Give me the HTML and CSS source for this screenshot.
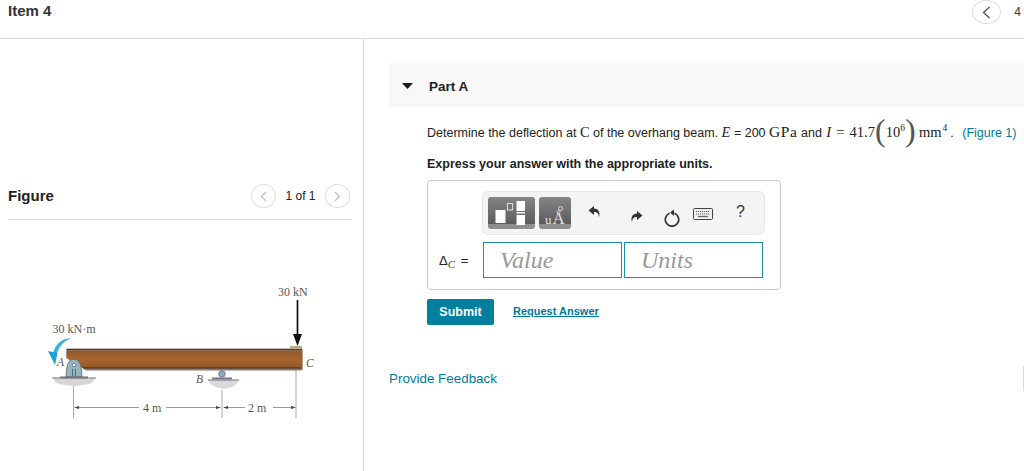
FILE: index.html
```html
<!DOCTYPE html>
<html lang="en">
<head>
<meta charset="utf-8">
<title>Item 4</title>
<link rel="stylesheet" href="styles.css">
</head>
<body>
<header class="top">
  <h1 class="item-title">Item 4</h1>
  <div class="pager">
    <span class="round round-lg"><svg width="9" height="13" viewBox="0 0 9 13"><path d="M7.5 1 1.500 6.500 7.500 12" fill="none" stroke="#555" stroke-width="1.400"/></svg></span>
    <span class="pager-num">4</span>
  </div>
</header>
<main class="columns">
  <section class="figure-col">
    <div class="figure-head">
      <h2 class="figure-title">Figure</h2>
      <div class="figure-nav">
        <span class="round"><svg width="7" height="11" viewBox="0 0 7 11"><path d="M6 1 1.500 5.500 6 10" fill="none" stroke="#bbb" stroke-width="1.200"/></svg></span>
        <span class="figure-count">1 of 1</span>
        <span class="round"><svg width="7" height="11" viewBox="0 0 7 11"><path d="M1 1 5.500 5.500 1 10" fill="none" stroke="#bbb" stroke-width="1.200"/></svg></span>
      </div>
    </div>
    <svg class="beam" width="340" height="170" viewBox="0 0 340 170">
      <defs>
        <linearGradient id="beamfill" x1="0" y1="0" x2="0" y2="1">
          <stop offset="0" stop-color="#8f5a2c"/><stop offset=".5" stop-color="#a9662f"/><stop offset="1" stop-color="#935827"/>
        </linearGradient>
      </defs>
      <g fill="#555" font-family="Liberation Serif, serif" font-size="12">
        <text x="278" y="26">30 kN</text>
        <text x="52.500" y="63">30 kN·m</text>
        <text x="143" y="142">4 m</text>
        <text x="248" y="142">2 m</text>
        <g font-style="italic" font-size="11.500">
          <text x="57" y="96">A</text>
          <text x="196" y="113">B</text>
          <text x="306" y="97">C</text>
        </g>
      </g>
      <g stroke="#aaa" stroke-width="1" fill="none">
        <path d="M73.500 112V148M222 120V148M296 100V148"/>
      </g>
      <g stroke="#999" stroke-width="1" fill="none">
        <path d="M76 137.500H139M166 137.500H219M225 137.500H245M273 137.500H293"/>
      </g>
      <g fill="#444">
        <path d="M74 137.500l5-1.500v3zM221 137.500l-5-1.500v3zM223 137.500l5-1.500v3zM296 137.500l-5-1.500v3z"/>
      </g>
      <path d="M52 107h44l-4 6q-18 6-36 0z" fill="#d6d6d6"/>
      <path d="M208 110h31q-3 8-15 9q-12-1-16-9z" fill="#d9d9d9"/>
      <rect x="66.500" y="78.500" width="235" height="22" fill="#8f7a70"/>
      <rect x="66.500" y="80.500" width="235" height="17.500" fill="url(#beamfill)"/>
      <path d="M66.500 79.500H302V100" fill="none" stroke="#5a3a28" stroke-width="1"/>
      <path d="M80 98H301" stroke="#3a2412" stroke-width="1"/>
      <rect x="290" y="76" width="12" height="3" fill="#b9a98c"/>
      <path d="M66 102V88L80 96 90 104V108H66z" fill="#fff"/>
      <path d="M66 107q0-18 8-18t8 18z" fill="#94b5c0" stroke="#4f5f66" stroke-width=".7"/>
      <circle cx="74" cy="95" r="1.700" fill="#fff" stroke="#456" stroke-width=".6"/>
      <path d="M72.500 99v7M75.500 99v7" stroke="#456" stroke-width=".8"/>
      <path d="M60 107.500H88" stroke="#667" stroke-width="2"/>
      <path d="M52 108H96" stroke="#888" stroke-width="1"/>
      <circle cx="222" cy="104" r="3.300" fill="#7fb3c2" stroke="#556" stroke-width=".6"/>
      <rect x="212" y="107.500" width="20" height="2" fill="#778"/>
      <path d="M208 110H239" stroke="#777" stroke-width="1"/>
      <path d="M297.500 30V66" stroke="#111" stroke-width="1.700"/>
      <path d="M293 64H302L297.500 76z" fill="#111"/>
      <path d="M71 68q-14 1-18 15l4 0q3-10 14-15z" fill="#35b2de"/>
      <path d="M48 81 57.500 83 55 95z" fill="#18a0d8"/>
    </svg>
  </section>
  <section class="part-col">
    <div class="part-bar">
      <svg class="caret" width="11" height="6" viewBox="0 0 11 6"><path d="M0 0H11L5.500 6z" fill="#1a1a1a"/></svg>
      <h2 class="part-title">Part A</h2>
    </div>
    <div class="part-body">
      <p class="question">Determine the deflection at <span class="m">C</span> of the overhang beam. <span class="m"><i>E</i></span> = 200 <span class="m m-units">GPa</span> and <span class="m m-eq"><i>I</i> = 41.7</span><span class="paren">(</span><span class="m">10<sup>6</sup></span><span class="paren">)</span> <span class="m m-mm">mm<sup>4</sup></span>. <a class="link-plain">(Figure 1)</a></p>
      <p class="express">Express your answer with the appropriate units.</p>
      <div class="answer">
        <div class="toolbar">
          <span class="tool tool-wide">
            <svg width="47" height="32" viewBox="0 0 47 32">
              <rect x="7.500" y="13" width="10" height="13" fill="#fff"/>
              <rect x="19.500" y="6.500" width="5" height="6.500" fill="none" stroke="#ddd" stroke-width="1"/>
              <rect x="28.500" y="4" width="8.500" height="10" fill="#fff"/>
              <rect x="28.500" y="15" width="8.500" height="1.500" fill="#fff"/>
              <rect x="28.500" y="18" width="8.500" height="10" fill="#fff"/>
            </svg>
          </span>
          <span class="tool tool-unit"><span class="unit-ring"></span><span class="unit-text"><span class="unit-mu">u</span>Å</span></span>
          <svg class="action action-undo" width="16" height="16" viewBox="0 0 16 16"><path d="M7 2 1.500 6.500 7 11V8c3 0 4.500 1 5 5 1.500-5-.5-8-5-8.500z" fill="#333"/></svg>
          <svg class="action action-redo" width="16" height="16" viewBox="0 0 16 16"><path d="M9 2 14.500 6.500 9 11V8c-3 0-4.500 1-5 5-1.500-5 .5-8 5-8.500z" fill="#333"/></svg>
          <svg class="action action-reset" width="18" height="18" viewBox="0 0 18 18"><path d="M6.500 4.300a6.700 6.700 0 1 0 5 0" fill="none" stroke="#333" stroke-width="1.700"/><path d="M11 .5V7L7 3.500z" fill="#333"/></svg>
          <svg class="action action-keys" width="20" height="12" viewBox="0 0 20 12"><rect x=".5" y=".5" width="19" height="11" rx="1" fill="#eee" stroke="#444"/><path d="M3 3.500h14M3 6h14" stroke="#666" stroke-width="1.200" stroke-dasharray="1.200 .8"/><path d="M5 8.500h10" stroke="#666" stroke-width="1.200"/></svg>
          <span class="help">?</span>
        </div>
        <div class="entry">
          <span class="delta">Δ<i class="sub">C</i> =</span>
          <span class="field">Value</span>
          <span class="field">Units</span>
        </div>
      </div>
      <div class="actions">
        <button class="submit" type="button">Submit</button>
        <a class="request">Request Answer</a>
      </div>
    </div>
    <a class="feedback">Provide Feedback</a>
  </section>
</main>
<span class="edge-mark"></span>
</body>
</html>
```
FILE: styles.css
```css
* { box-sizing: border-box; }
html, body { margin: 0; height: 471px; overflow: hidden; background: #fff; }
body { font-family: "Liberation Sans", Arial, sans-serif; color: #222; font-size: 12px; position: relative; }

.top { height: 39px; border-bottom: 1px solid #dcdcdc; display: flex; justify-content: space-between; align-items: flex-start; padding: 0 0 0 8px; }
.item-title { margin: 2px 0 0; font-size: 15px; line-height: 18px; font-weight: 700; color: #333; }
.pager { display: flex; align-items: center; gap: 13px; padding-right: 3px; }
.pager-num { font-size: 12px; line-height: 24px; color: #333; }
.round { width: 25px; height: 24px; border: 1px solid #dedede; border-radius: 50%; display: inline-flex; align-items: center; justify-content: center; background: #fff; }
.round-lg { width: 29px; height: 24px; border-radius: 50%; }

.columns { display: grid; grid-template-columns: 364px 1fr; height: 432px; }
.figure-col { border-right: 1px solid #d8d8d8; padding: 145px 11px 0 8px; }
.figure-head { height: 36px; border-bottom: 1px solid #dcdcdc; display: flex; justify-content: space-between; align-items: center; padding-bottom: 11px; }
.figure-title { margin: 0; font-size: 15px; font-weight: 700; color: #222; line-height: 18px; }
.figure-nav { display: flex; align-items: center; gap: 9.500px; margin-right: 2px; }
.figure-count { font-size: 12px; color: #222; }
.beam { display: block; margin: 50px 0 0 -8px; }

.part-col { padding: 24px 0 0 25px; }
.part-bar { height: 44px; background: #f8f8f8; display: flex; align-items: center; padding-left: 13px; gap: 16px; }
.caret { margin-top: 1px; }
.part-title { margin: 2px 0 0; font-size: 13.500px; font-weight: 700; color: #222; }
.part-body { padding-left: 38px; }
.question { margin: 14px 0 0; font-size: 12.500px; line-height: 22px; white-space: nowrap; color: #222; }
.m { font-family: "Liberation Serif", serif; font-size: 14.500px; }
.m sup { font-size: 9.500px; line-height: 0; }
.m-units { font-size: 15.500px; letter-spacing: .6px; }
.m-eq { word-spacing: 1.500px; margin-left: 1px; }
.m-mm { margin-right: 3px; }
.m-mm sup { margin-left: 1px; }
.paren { font-family: "Liberation Serif", serif; font-size: 32px; line-height: 0; font-weight: 300; vertical-align: -4px; color: #555; }
.link-plain { color: #007a99; margin-left: 5px; }
.express { margin: 12px 0 0; font-weight: 700; font-size: 12.500px; line-height: 16px; color: #222; }

.answer { margin-top: 8px; width: 354px; height: 110px; border: 1px solid #ccc; border-radius: 4px; padding: 10px 15px 0 11px; }
.toolbar { margin-left: 43px; width: 283px; height: 44px; background: #f4f4f4; border: 1px solid #e6e6e6; border-radius: 6px; display: flex; align-items: center; padding-left: 5px; position: relative; }
.tool { height: 32px; border-radius: 3px; background: linear-gradient(#858585, #5c5c5c 84%, #8e8e8e 84%); display: inline-block; }
.tool-wide { width: 47px; }
.tool-wide svg { display: block; }
.tool-unit { width: 32px; margin-left: 4px; position: relative; display: inline-flex; justify-content: center; align-items: flex-end; }
.unit-ring { position: absolute; left: 19px; top: 9px; width: 5px; height: 5px; border: 1px solid #ddd; border-radius: 50%; }
.unit-text { font-family: "Liberation Serif", serif; font-size: 17px; color: #e4e4e4; line-height: 18px; }
.unit-mu { font-size: 13px; margin-right: 1px; }
.action { display: block; flex: none; }
.toolbar .action-undo { margin-left: 16px; margin-top: -2px; }
.toolbar .action-redo { margin-left: 25px; margin-top: 7px; }
.toolbar .action-reset { margin-left: 19px; margin-top: 9px; }
.toolbar .action-keys { margin-left: 12px; margin-top: 1px; }
.help { margin-left: 23px; font-size: 16px; color: #333; margin-top: -2px; }

.entry { margin-top: 7px; display: flex; align-items: center; gap: 2px; height: 36px; }
.delta { width: 42px; padding-left: 0; font-size: 13px; white-space: nowrap; color: #222; }
.delta .sub { font-family: "Liberation Serif", serif; font-size: 11px; position: relative; top: 3px; color: #444; margin-right: 2px; }
.field { width: 139px; height: 36px; border: 1px solid #1c8fa8; font-family: "Liberation Serif", serif; font-style: italic; font-size: 24px; color: #999; line-height: 35px; padding-left: 16px; }

.actions { margin-top: 9px; display: flex; align-items: center; gap: 19px; }
.submit { width: 67px; height: 26px; background: #007f9e; border: 0; border-radius: 2px; color: #fff; font: 700 12.500px "Liberation Sans", sans-serif; padding: 0; }
.request { color: #00789a; font-size: 11px; font-weight: 700; text-decoration: underline; margin-top: -2px; }
.feedback { display: block; margin-top: 46px; color: #007a99; font-size: 13.400px; }

.edge-mark { position: absolute; right: 0; top: 366px; width: 1px; height: 25px; background: #ddd; }
```
